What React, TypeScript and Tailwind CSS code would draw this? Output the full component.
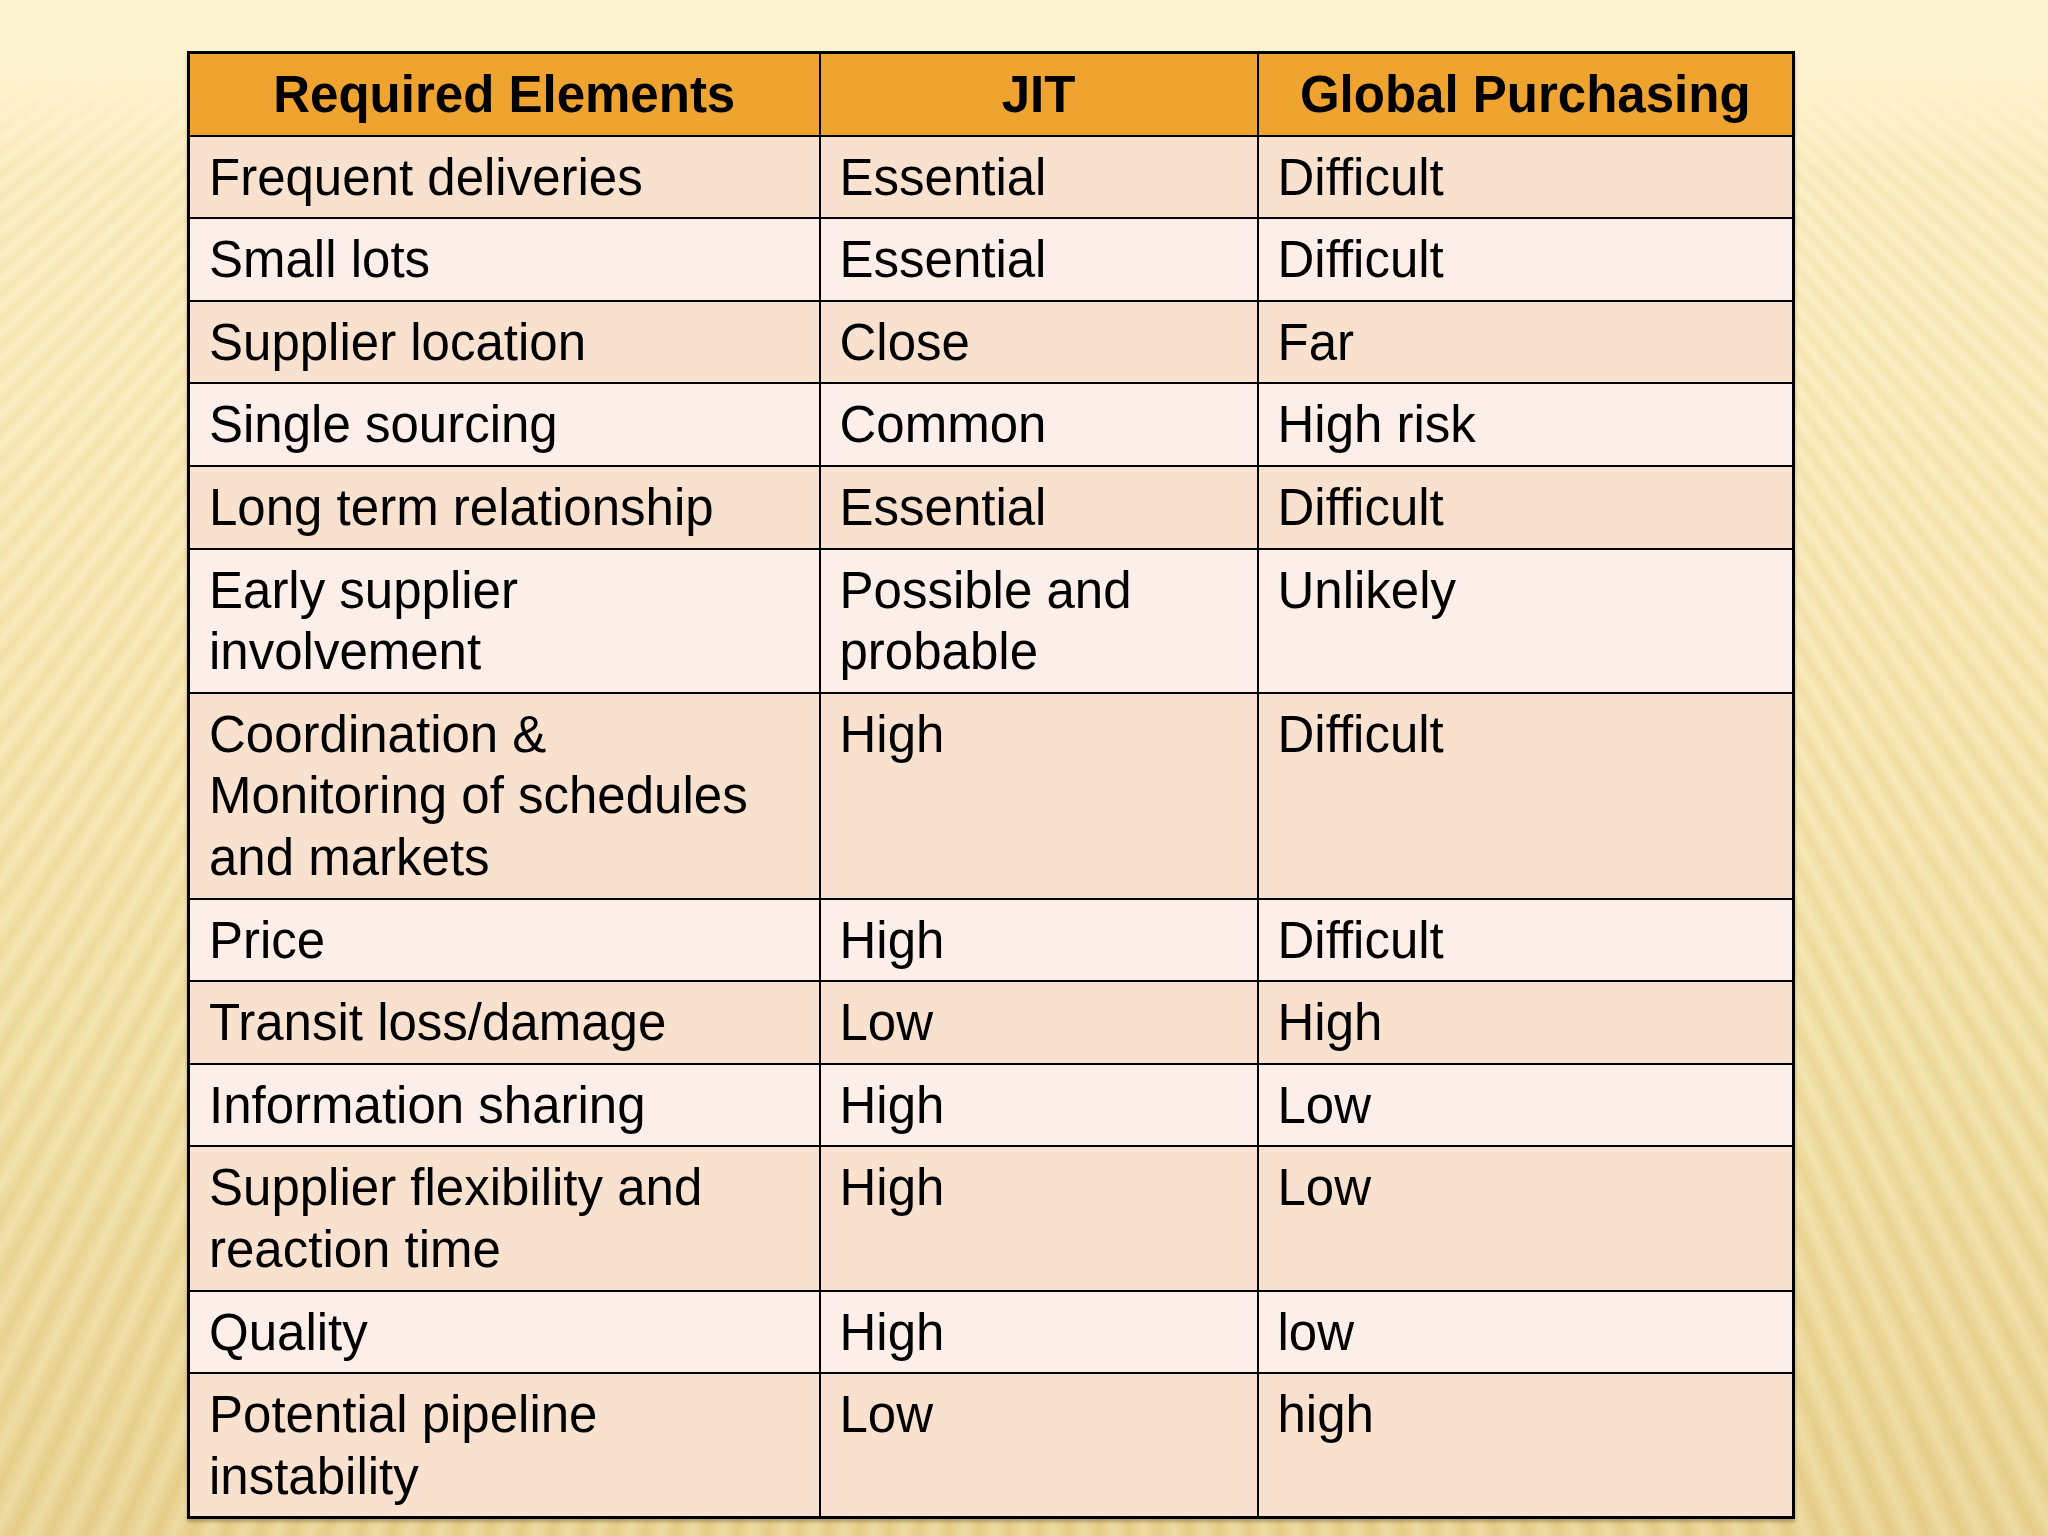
const rows: [string, string, string][] = [
  ['Frequent deliveries', 'Essential', 'Difficult'],
  ['Small lots', 'Essential', 'Difficult'],
  ['Supplier location', 'Close', 'Far'],
  ['Single sourcing', 'Common', 'High risk'],
  ['Long term relationship', 'Essential', 'Difficult'],
  ['Early supplier involvement', 'Possible and probable', 'Unlikely'],
  ['Coordination & Monitoring of schedules and markets', 'High', 'Difficult'],
  ['Price', 'High', 'Difficult'],
  ['Transit loss/damage', 'Low', 'High'],
  ['Information sharing', 'High', 'Low'],
  ['Supplier flexibility and reaction time', 'High', 'Low'],
  ['Quality', 'High', 'low'],
  ['Potential pipeline instability', 'Low', 'high'],
]

const headers = ['Required Elements', 'JIT', 'Global Purchasing']

export default function App() {
  return (
    <div className="w-[2048px] h-[1536px] overflow-hidden pt-[51px] pl-[187px] font-['Liberation_Sans',Arial,sans-serif] text-black [background-image:linear-gradient(to_bottom,#fef3cf_0px,#fef3cf_70px,rgba(254,243,207,0)_170px),repeating-conic-gradient(from_0deg_at_50%_-40%,rgba(255,250,225,0.28)_0deg,rgba(205,175,95,0.10)_0.4deg,rgba(255,250,225,0.28)_0.8deg),linear-gradient(to_bottom,#fdf0c6_0%,#f8e7b2_35%,#efdc9d_70%,#e7cf8b_100%)]">
      <table className="table-fixed w-[1605px] border-collapse border-[3px] border-black shadow-[0_3px_3px_rgba(80,60,20,0.35)]">
        <colgroup>
          <col className="w-[631px]" />
          <col className="w-[438px]" />
          <col className="w-[536px]" />
        </colgroup>
        <thead>
          <tr className="bg-[#f0a430]">
            {headers.map((h) => (
              <th
                key={h}
                className="border-2 border-black pt-[10px] pb-[9px] px-4 text-center text-[51px] leading-[61.6px] font-bold"
              >
                {h}
              </th>
            ))}
          </tr>
        </thead>
        <tbody>
          {rows.map((r, i) => (
            <tr key={r[0]} className={i % 2 === 0 ? 'bg-[#f9e1d0]' : 'bg-[#fcefe9]'}>
              {r.map((c, j) => (
                <td
                  key={j}
                  className="border-2 border-black pt-[10px] pb-[9px] pl-[19px] pr-[50px] align-top text-left text-[51px] leading-[61.6px] font-normal"
                >
                  {c}
                </td>
              ))}
            </tr>
          ))}
        </tbody>
      </table>
    </div>
  )
}
